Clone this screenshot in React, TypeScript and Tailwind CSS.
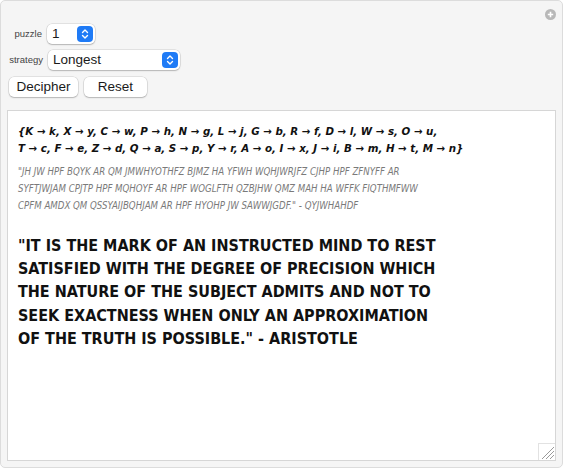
import React from 'react';

function Stepper() {
  return (
    <span className="flex h-[16px] w-[16px] items-center justify-center rounded-[4px] bg-[#1f7bf6]">
      <svg width="8" height="12" viewBox="0 0 8 12" fill="none" stroke="white" strokeWidth="1.4" strokeLinecap="round" strokeLinejoin="round">
        <path d="M1.5 4.5 L4 2 L6.5 4.5" />
        <path d="M1.5 7.5 L4 10 L6.5 7.5" />
      </svg>
    </span>
  );
}

function Select({ value, width }: { value: string; width: string }) {
  return (
    <div className={`flex h-[20px] items-center justify-between rounded-[5px] bg-white pl-[5px] pr-[2px] shadow-[0_0_0_0.5px_rgba(0,0,0,0.15),0_1px_1.5px_rgba(0,0,0,0.2)] ${width}`}>
      <span className="text-[13.5px] leading-none text-[#1a1a1a]">{value}</span>
      <Stepper />
    </div>
  );
}

function Button({ label, width }: { label: string; width: string }) {
  return (
    <button className={`flex h-[20px] items-center justify-center rounded-[5px] bg-white text-[13.5px] leading-none text-[#1a1a1a] shadow-[0_0_0_0.5px_rgba(0,0,0,0.15),0_1px_1.5px_rgba(0,0,0,0.2)] ${width}`}>
      {label}
    </button>
  );
}

const mapping = [
  '{K → k, X → y, C → w, P → h, N → g, L → j, G → b, R → f, D → l, W → s, O → u,',
  'T → c, F → e, Z → d, Q → a, S → p, Y → r, A → o, I → x, J → i, B → m, H → t, M → n}',
];

const cipher = [
  '"JH JW HPF BQYK AR QM JMWHYOTHFZ BJMZ HA YFWH WQHJWRJFZ CJHP HPF ZFNYFF AR',
  'SYFTJWJAM CPJTP HPF MQHOYF AR HPF WOGLFTH QZBJHW QMZ MAH HA WFFK FIQTHMFWW',
  'CPFM AMDX QM QSSYAIJBQHJAM AR HPF HYOHP JW SAWWJGDF." - QYJWHAHDF',
];

const plain = [
  '"IT IS THE MARK OF AN INSTRUCTED MIND TO REST',
  'SATISFIED WITH THE DEGREE OF PRECISION WHICH',
  'THE NATURE OF THE SUBJECT ADMITS AND NOT TO',
  'SEEK EXACTNESS WHEN ONLY AN APPROXIMATION',
  'OF THE TRUTH IS POSSIBLE." - ARISTOTLE',
];

export default function App() {
  return (
    <div className="h-[469px] w-[564px] bg-white font-['Liberation_Sans',Arial,sans-serif]">
      <div className="relative flex h-[468px] w-[563px] flex-col rounded-[5px] border border-[#dcdcdc] bg-[#f5f5f5]">
        {/* plus button */}
        <div className="absolute right-[6px] top-[8px] flex h-[11px] w-[11px] items-center justify-center rounded-full bg-[#b8b8b8]">
          <svg width="7" height="7" viewBox="0 0 7 7" stroke="white" strokeWidth="1.6">
            <path d="M3.5 0.8 V6.2 M0.8 3.5 H6.2" />
          </svg>
        </div>

        {/* controls */}
        <div className="flex flex-col pl-[6px] pt-[23px]">
          <div className="flex items-center">
            <span className="w-[35px] text-right text-[9.5px] text-[#444]">puzzle</span>
            <div className="ml-[5px]">
              <Select value="1" width="w-[48px]" />
            </div>
          </div>
          <div className="mt-[6px] flex items-center">
            <span className="w-[36px] text-right text-[9.5px] text-[#444]">strategy</span>
            <div className="ml-[5px]">
              <Select value="Longest" width="w-[132px]" />
            </div>
          </div>
          <div className="mt-[7px] flex gap-[6px] pl-[2px]">
            <Button label="Decipher" width="w-[69px]" />
            <Button label="Reset" width="w-[63px]" />
          </div>
        </div>

        {/* output */}
        <div className="relative mx-[6px] mt-[13px] h-[351px] border border-[#d6d6d6] bg-white pl-[10px] pt-[12px] font-['DejaVu_Sans',Verdana,sans-serif]">
          <div className="text-[10.3px] font-bold italic leading-[17px] text-[#111]">
            {mapping.map((l) => (
              <div key={l} className="whitespace-nowrap">{l}</div>
            ))}
          </div>
          <div className="mt-[6px] font-['DejaVu_Sans_Condensed','DejaVu_Sans',sans-serif] text-[9.6px] italic leading-[17px] text-[#7a7a7a]">
            {cipher.map((l) => (
              <div key={l} className="whitespace-nowrap">{l}</div>
            ))}
          </div>
          <div className="mt-[20px] font-['DejaVu_Sans_Condensed','DejaVu_Sans',sans-serif] text-[16px] font-bold leading-[23.2px] text-[#111]">
            {plain.map((l) => (
              <div key={l} className="whitespace-nowrap">{l}</div>
            ))}
          </div>

          {/* resize grip */}
          <div className="absolute bottom-0 right-0 h-[17px] w-[17px] border-l border-t border-[#e2e2e2] bg-white">
            <svg width="16" height="16" viewBox="0 0 16 16" stroke="#9a9a9a" strokeWidth="1">
              <path d="M3 15 L15 3 M7 15 L15 7 M11 15 L15 11" />
            </svg>
          </div>
        </div>
      </div>
    </div>
  );
}
